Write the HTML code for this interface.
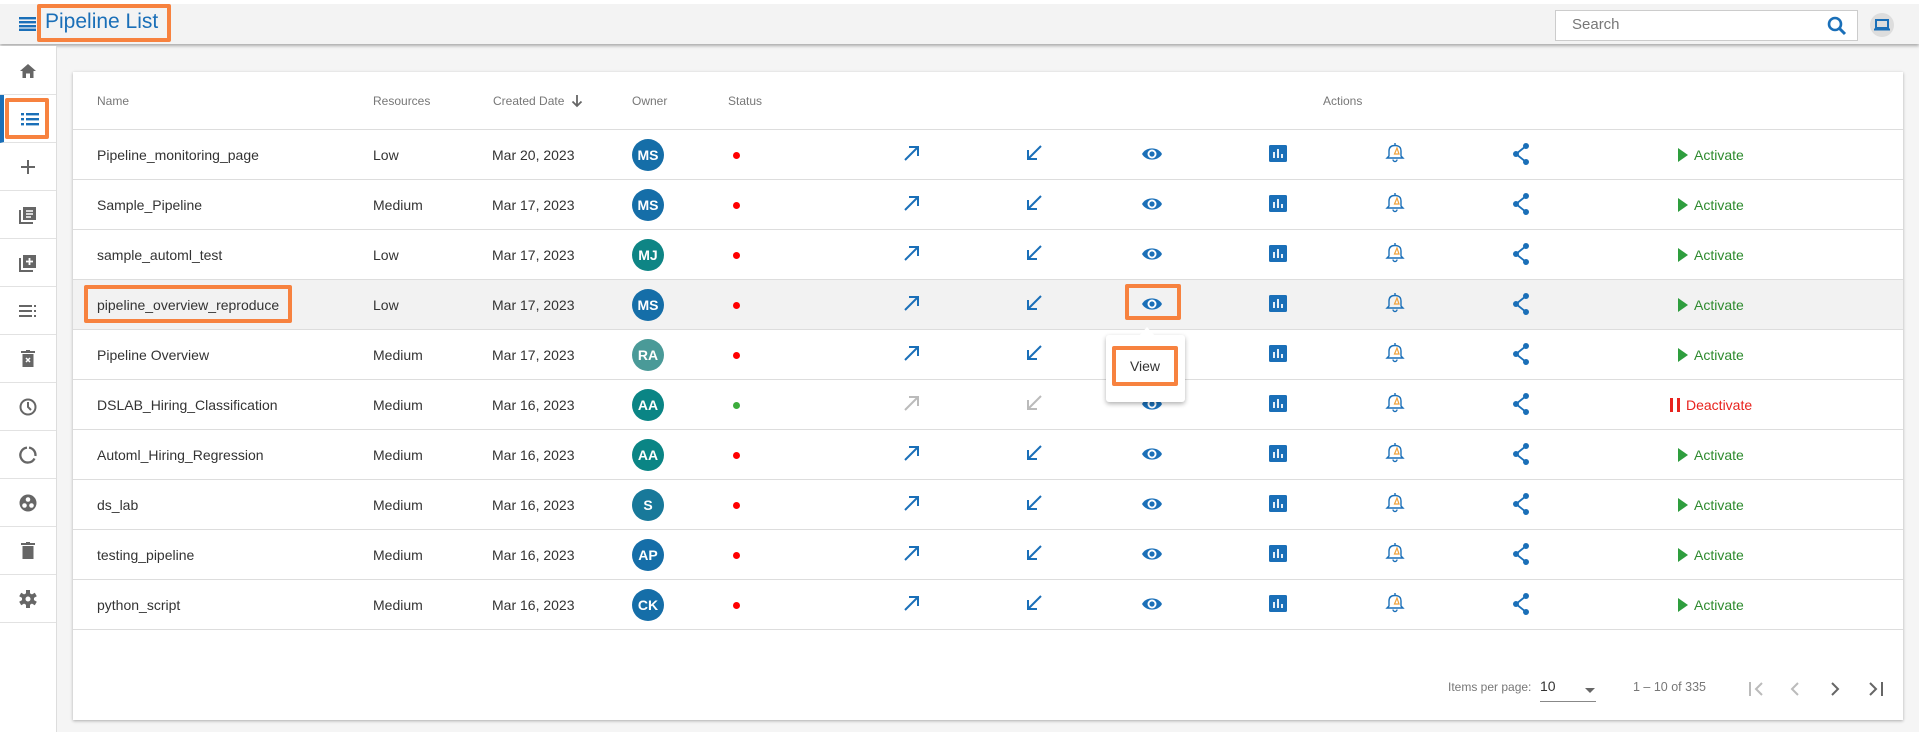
<!DOCTYPE html>
<html><head><meta charset="utf-8"><style>
*{box-sizing:border-box;margin:0;padding:0}
body{width:1919px;height:732px;background:#f5f5f5;font-family:"Liberation Sans",sans-serif;position:relative;overflow:hidden;color:#333}
.top{position:absolute;left:0;top:0;width:1919px;height:44px;background:#f3f3f3;border-top:4px solid #fff;box-shadow:0 2px 3px rgba(0,0,0,.3)}
.side{position:absolute;left:0;top:46px;width:57px;height:686px;background:#fff;border-right:1px solid #ddd}
.si{position:absolute;left:0;width:56px;height:48px;border-bottom:1px solid #e2e2e2;display:flex;align-items:center;justify-content:center}
.card{position:absolute;left:73px;top:72px;width:1830px;height:648px;background:#fff;box-shadow:0 1px 3px rgba(0,0,0,.3)}
.hd{position:absolute;top:94px;font-size:12px;color:#777}
.row{position:absolute;left:73px;width:1830px;height:50px;border-bottom:1px solid #ddd}
.row.h{background:#f2f2f2}
.c{position:absolute;top:0;height:50px;display:flex;align-items:center;font-size:14px;color:#333}
.av{width:32px;height:32px;border-radius:50%;color:#fff;font-weight:bold;font-size:14px;display:flex;align-items:center;justify-content:center}
.dot{width:8px;height:8px;border-radius:50%;background:#f00}
.ic{position:absolute;top:13px}
.act{position:absolute;left:1605px;top:0;height:50px;display:flex;align-items:center;color:#2e8b2e;font-size:14px}
.ob{position:absolute;border:4px solid #f7823f;border-radius:2px}
</style></head><body>
<div class="top">
<svg style="position:absolute;left:19px;top:13px" width="17" height="14"><rect y="0" width="17" height="2.4" fill="#1a6fb8"/><rect y="4" width="17" height="2.4" fill="#1a6fb8"/><rect y="8" width="17" height="2.4" fill="#1a6fb8"/><rect y="11.6" width="17" height="2.4" fill="#1a6fb8"/></svg>
<div style="position:absolute;left:45px;top:6px;font-size:21px;color:#1a6fb8">Pipeline List</div>
<div style="position:absolute;left:1555px;top:6px;width:303px;height:31px;border:1px solid #ccc;background:#fff"></div>
<div style="position:absolute;left:1572px;top:12px;font-size:15px;color:#777">Search</div>
<svg style="position:absolute;left:1827px;top:12px" width="20" height="20"><circle cx="8" cy="8" r="6" fill="none" stroke="#1a6fb8" stroke-width="2.6"/><path d="M12.5 12.5 L18 18" stroke="#1a6fb8" stroke-width="3"/></svg>
<div style="position:absolute;left:1870px;top:9px;width:24px;height:24px;border-radius:50%;background:#ddd"></div>
<svg style="position:absolute;left:1874px;top:15px" width="16" height="12"><rect x="2" y="1" width="12" height="8" fill="none" stroke="#1a6fb8" stroke-width="2"/><rect x="0" y="9.5" width="16" height="2" fill="#1a6fb8"/></svg>
</div>
<div class="ob" style="left:37px;top:4px;width:134px;height:38px"></div>

<div class="side">
<div class="si" style="top:1px;height:48px"><svg width="18" height="16"><path d="M9 1 L1 8 H3.5 V15 H7 V10.5 H11 V15 H14.5 V8 H17 Z" fill="#666"/></svg></div>
<div class="si" style="top:49px;border-left:4px solid #1a6fb8"><svg width="18" height="14"><g fill="#1a6fb8"><rect x="0" y="1" width="3" height="2.4"/><rect x="5" y="1" width="13" height="2.4"/><rect x="0" y="6" width="3" height="2.4"/><rect x="5" y="6" width="13" height="2.4"/><rect x="0" y="11" width="3" height="2.4"/><rect x="5" y="11" width="13" height="2.4"/></g></svg></div>
<div class="si" style="top:97px"><svg width="16" height="16"><path d="M8 1V15M1 8H15" stroke="#666" stroke-width="2"/></svg></div>
<div class="si" style="top:145px"><svg width="18" height="18"><path d="M1 4V17H14" stroke="#666" stroke-width="2" fill="none"/><rect x="4" y="1" width="13" height="13" fill="#666"/><path d="M7 5H14M7 8H14M7 11H12" stroke="#fff" stroke-width="1.4"/></svg></div>
<div class="si" style="top:193px"><svg width="18" height="18"><path d="M1 4V17H14" stroke="#666" stroke-width="2" fill="none"/><rect x="4" y="1" width="13" height="13" fill="#666"/><path d="M10.5 4V11M7 7.5H14" stroke="#fff" stroke-width="1.8"/></svg></div>
<div class="si" style="top:241px"><svg width="18" height="12"><g fill="#666"><rect y="0" width="13" height="2"/><rect y="5" width="13" height="2"/><rect y="10" width="13" height="2"/><rect x="15" y="0" width="2" height="2"/><rect x="15" y="5" width="2" height="2"/><rect x="15" y="10" width="2" height="2"/></g></svg></div>
<div class="si" style="top:289px"><svg width="14" height="17"><rect x="0" y="1" width="14" height="2" fill="#666"/><rect x="5" y="0" width="4" height="2" fill="#666"/><rect x="1.5" y="4" width="11" height="13" fill="#666"/><path d="M5 8L9 12M9 8L5 12" stroke="#fff" stroke-width="1.5"/></svg></div>
<div class="si" style="top:337px"><svg width="18" height="18"><circle cx="9" cy="9" r="7.5" fill="none" stroke="#666" stroke-width="2"/><path d="M9 4V9L12 12" stroke="#666" stroke-width="2" fill="none"/></svg></div>
<div class="si" style="top:385px"><svg width="18" height="18"><path d="M10 1.6A7.5 7.5 0 0 1 16.4 10M15.5 12.5A7.5 7.5 0 1 1 8 1.6" fill="none" stroke="#666" stroke-width="2.3"/></svg></div>
<div class="si" style="top:433px"><svg width="18" height="18"><circle cx="9" cy="9" r="8.5" fill="#666"/><circle cx="9" cy="5.5" r="2.3" fill="#fff"/><circle cx="5.5" cy="11.5" r="2.3" fill="#fff"/><circle cx="12.5" cy="11.5" r="2.3" fill="#fff"/></svg></div>
<div class="si" style="top:481px"><svg width="14" height="17"><rect x="0" y="1" width="14" height="2" fill="#666"/><rect x="5" y="0" width="4" height="2" fill="#666"/><rect x="1.5" y="4" width="11" height="13" fill="#666"/></svg></div>
<div class="si" style="top:529px"><svg width="18" height="18"><g transform="translate(9 9)"><circle r="6" fill="#666"/><g fill="#666"><rect x="-2" y="-9" width="4" height="18"/><rect x="-2" y="-9" width="4" height="18" transform="rotate(60)"/><rect x="-2" y="-9" width="4" height="18" transform="rotate(120)"/></g><circle r="2.5" fill="#fff"/></g></svg></div>
</div>
<div class="ob" style="left:5px;top:98px;width:44px;height:41px"></div>

<div class="card"></div>
<div class="hd" style="left:97px">Name</div>
<div class="hd" style="left:373px">Resources</div>
<div class="hd" style="left:493px">Created Date</div>
<svg style="position:absolute;left:571px;top:94px" width="12" height="14"><path d="M6 1V12M1.5 7.5L6 12L10.5 7.5" stroke="#666" stroke-width="1.8" fill="none"/></svg>
<div class="hd" style="left:632px">Owner</div>
<div class="hd" style="left:728px">Status</div>
<div class="hd" style="left:1323px">Actions</div>
<div style="position:absolute;left:73px;top:129px;width:1830px;height:1px;background:#ddd"></div>

<div id="rows">
<div class="row" style="top:130px"><div class="c" style="left:24px">Pipeline_monitoring_page</div><div class="c" style="left:300px">Low</div><div class="c" style="left:419px">Mar 20, 2023</div><div class="c" style="left:559px"><div class="av" style="background:#156ea8">MS</div></div></div>
<div class="row" style="top:180px"><div class="c" style="left:24px">Sample_Pipeline</div><div class="c" style="left:300px">Medium</div><div class="c" style="left:419px">Mar 17, 2023</div><div class="c" style="left:559px"><div class="av" style="background:#156ea8">MS</div></div></div>
<div class="row" style="top:230px"><div class="c" style="left:24px">sample_automl_test</div><div class="c" style="left:300px">Low</div><div class="c" style="left:419px">Mar 17, 2023</div><div class="c" style="left:559px"><div class="av" style="background:#0e8585">MJ</div></div></div>
<div class="row h" style="top:280px"><div class="c" style="left:24px">pipeline_overview_reproduce</div><div class="c" style="left:300px">Low</div><div class="c" style="left:419px">Mar 17, 2023</div><div class="c" style="left:559px"><div class="av" style="background:#156ea8">MS</div></div></div>
<div class="row" style="top:330px"><div class="c" style="left:24px">Pipeline Overview</div><div class="c" style="left:300px">Medium</div><div class="c" style="left:419px">Mar 17, 2023</div><div class="c" style="left:559px"><div class="av" style="background:#4a9a98">RA</div></div></div>
<div class="row" style="top:380px"><div class="c" style="left:24px">DSLAB_Hiring_Classification</div><div class="c" style="left:300px">Medium</div><div class="c" style="left:419px">Mar 16, 2023</div><div class="c" style="left:559px"><div class="av" style="background:#0a8585">AA</div></div></div>
<div class="row" style="top:430px"><div class="c" style="left:24px">Automl_Hiring_Regression</div><div class="c" style="left:300px">Medium</div><div class="c" style="left:419px">Mar 16, 2023</div><div class="c" style="left:559px"><div class="av" style="background:#0a8585">AA</div></div></div>
<div class="row" style="top:480px"><div class="c" style="left:24px">ds_lab</div><div class="c" style="left:300px">Medium</div><div class="c" style="left:419px">Mar 16, 2023</div><div class="c" style="left:559px"><div class="av" style="background:#18799a">S</div></div></div>
<div class="row" style="top:530px"><div class="c" style="left:24px">testing_pipeline</div><div class="c" style="left:300px">Medium</div><div class="c" style="left:419px">Mar 16, 2023</div><div class="c" style="left:559px"><div class="av" style="background:#156ea8">AP</div></div></div>
<div class="row" style="top:580px"><div class="c" style="left:24px">python_script</div><div class="c" style="left:300px">Medium</div><div class="c" style="left:419px">Mar 16, 2023</div><div class="c" style="left:559px"><div class="av" style="background:#156ea8">CK</div></div></div>
</div>

<div class="ob" style="left:84px;top:285px;width:208px;height:38px"></div>
<div class="ob" style="left:1125px;top:284px;width:56px;height:36px"></div>
<div style="position:absolute;left:1106px;top:335px;width:79px;height:67px;background:#fff;box-shadow:0 2px 5px rgba(0,0,0,.3);border-radius:3px"></div>
<div style="position:absolute;left:1139px;top:327px;width:0;height:0;border-left:8px solid transparent;border-right:8px solid transparent;border-bottom:9px solid #fff"></div>
<div class="ob" style="left:1112px;top:346px;width:66px;height:40px;display:flex;align-items:center;justify-content:center;font-size:14px;color:#333">View</div>

<div style="position:absolute;left:1448px;top:680px;font-size:12px;color:#777">Items per page:</div>
<div style="position:absolute;left:1540px;top:678px;font-size:14px;color:#333">10</div>
<div style="position:absolute;left:1585px;top:688px;border-left:5px solid transparent;border-right:5px solid transparent;border-top:5px solid #666"></div>
<div style="position:absolute;left:1540px;top:701px;width:56px;height:1px;background:#888"></div>
<div style="position:absolute;left:1633px;top:680px;font-size:12.5px;color:#777">1 – 10 of 335</div>
<svg style="position:absolute;left:1748px;top:681px" width="140" height="16"><path d="M2 1V15M14 2L8 8L14 14" stroke="#bbb" stroke-width="2" fill="none"/><path d="M50 2L44 8L50 14" stroke="#bbb" stroke-width="2" fill="none"/><path d="M84 2L90 8L84 14" stroke="#666" stroke-width="2" fill="none"/><path d="M122 2L128 8L122 14M134 1V15" stroke="#666" stroke-width="2" fill="none"/></svg>

<script>
var B='#1a6fb8';
var rows=document.querySelectorAll('#rows .row');
rows.forEach(function(r,i){
 var on=i==5;
 var h='';
 h+='<div class="c" style="left:660px"><div class="dot" style="width:7px;height:7px;background:'+(on?'#3cac3c':'#f00')+'"></div></div>';
 var ac=on?'#bbb':B;
 h+='<svg class="ic" style="left:829px" width="20" height="20"><path d="M3 17L16 4M7 4H16V13" stroke="'+ac+'" stroke-width="2" fill="none"/></svg>';
 h+='<svg class="ic" style="left:951px" width="20" height="20"><path d="M17 3L4 16M4 7V16H13" stroke="'+ac+'" stroke-width="2" fill="none"/></svg>';
 h+='<svg class="ic" style="left:1068px" width="22" height="22"><path d="M1 11C5 3.5 17 3.5 21 11C17 18.5 5 18.5 1 11Z" fill="'+B+'"/><circle cx="11" cy="11" r="4.5" fill="#fff"/><circle cx="11" cy="11" r="2.6" fill="'+B+'"/></svg>';
 h+='<svg class="ic" style="left:1196px" width="18" height="20"><rect x="0" y="2" width="18" height="17" rx="1.5" fill="'+B+'"/><path d="M5 15V9M9 15V6M13 15V11" stroke="#fff" stroke-width="1.8"/></svg>';
 h+='<svg class="ic" style="left:1312px;top:11px" width="20" height="22"><path d="M10 2V4M4 15V10C4 6 6.5 4.5 10 4.5C13.5 4.5 16 6 16 10V15L18 17H2Z M8 18.5A2 2 0 0 0 12 18.5" fill="none" stroke="'+B+'" stroke-width="1.4"/><path d="M12 7L9.5 13H14Z" fill="none" stroke="#f2a23a" stroke-width="1.2"/></svg>';
 h+='<svg class="ic" style="left:1438px;top:12px" width="20" height="24"><path d="M15 4L5 12L15 20" stroke="'+B+'" stroke-width="1.8" fill="none"/><circle cx="15" cy="4" r="3" fill="'+B+'"/><circle cx="5" cy="12" r="3" fill="'+B+'"/><circle cx="15" cy="20" r="3" fill="'+B+'"/></svg>';
 if(on) h+='<div class="act" style="left:1597px;color:#e8231e"><span style="display:inline-block;width:3px;height:14px;background:#e8231e;margin-right:4px"></span><span style="display:inline-block;width:3px;height:14px;background:#e8231e;margin-right:6px"></span>Deactivate</div>';
 else h+='<div class="act"><span style="display:inline-block;border-top:7px solid transparent;border-bottom:7px solid transparent;border-left:10px solid #2e9e3e;margin-right:6px"></span>Activate</div>';
 r.insertAdjacentHTML('beforeend',h);
});
</script>
</body></html>
